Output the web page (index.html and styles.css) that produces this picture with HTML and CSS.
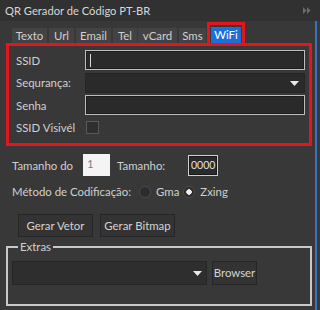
FILE: index.html
```html
<!DOCTYPE html>
<html>
<head>
<meta charset="utf-8">
<link rel="stylesheet" href="styles.css">
</head>
<body>
<div class="window">
  <div class="titlebar">
    <span class="title">QR Gerador de Código PT-BR</span>
    <svg class="pin" width="8" height="7" viewBox="0 0 8 7"><path d="M0 0 L3.5 3.5 L0 7 Z M4 0 L7.5 3.5 L4 7 Z" fill="#6a6a6a"/></svg>
  </div>
  <div class="main">
    <div class="tabs">
      <span class="tab t-texto">Texto</span>
      <span class="tab t-url">Url</span>
      <span class="tab t-email">Email</span>
      <span class="tab t-tel">Tel</span>
      <span class="tab t-vcard">vCard</span>
      <span class="tab t-sms">Sms</span>
      <span class="tab-active-wrap"><span class="tab active">WiFi</span></span>
    </div>
    <div class="wifi-box">
      <div class="form-grid">
        <span class="label">SSID</span>
        <div class="input light"><span class="caret"></span></div>
        <span class="label">Sequrança:</span>
        <div class="input select"><svg class="arrow" width="9" height="5" viewBox="0 0 9 5"><path d="M0 0 H9 L4.5 5 Z" fill="#e8e8e8"/></svg></div>
        <span class="label">Senha</span>
        <div class="input light"></div>
        <span class="label">SSID Visivél</span>
        <div class="check-cell"><span class="checkbox"></span></div>
      </div>
    </div>
    <div class="size-row">
      <span class="label">Tamanho do</span>
      <span class="num-box">1</span>
      <span class="label size-label">Tamanho:</span>
      <span class="dim-box">0000</span>
    </div>
    <div class="method-row">
      <span class="label">Método de Codificação:</span>
      <span class="radio first"></span>
      <span class="label">Gma</span>
      <span class="radio on"></span>
      <span class="label">Zxing</span>
    </div>
    <div class="btn-row">
      <span class="btn">Gerar Vetor</span>
      <span class="btn">Gerar Bitmap</span>
    </div>
    <fieldset class="extras">
      <legend>Extras</legend>
      <div class="extras-row">
        <div class="input select combo"><svg class="arrow" width="9" height="5" viewBox="0 0 9 5"><path d="M0 0 H9 L4.5 5 Z" fill="#e8e8e8"/></svg></div>
        <span class="btn browser">Browser</span>
      </div>
    </fieldset>
  </div>
</div>
</body>
</html>
```

FILE: styles.css
```css
html, body {
  margin: 0;
  padding: 0;
  background: #383838;
}
.window {
  width: 320px;
  height: 310px;
  background: #383838;
  font-family: Lato, "Noto Sans", sans-serif;
  font-size: 11.4px;
  color: #d2d2d2;
  overflow: hidden;
}
.titlebar {
  height: 21px;
  background: #313131;
  display: flex;
  align-items: center;
  justify-content: space-between;
  padding: 0 9px 0 5px;
  box-sizing: border-box;
}
.title {
  font-size: 11.2px;
  color: #d8d8d8;
  line-height: 1;
  white-space: nowrap;
}
.pin { display: block; }
.main {
  margin-right: 3px;
  border-right: 2px solid #3a72bb;
  height: 289px;
  box-sizing: border-box;
}
.tabs {
  display: flex;
  align-items: flex-end;
  padding-left: 12px;
  height: 22px;
}
.tab {
  display: block;
  height: 15px;
  line-height: 15px;
  background: #434343;
  color: #d0d0d0;
  text-align: center;
  white-space: nowrap;
}
.t-texto { width: 35px; }
.t-url { width: 25px; margin-left: 2px; }
.t-email { width: 35px; margin-left: 2px; }
.t-tel { width: 24px; margin-left: 2px; }
.t-vcard { width: 39px; margin-left: 1px; }
.t-sms { width: 27px; margin-left: 2px; }
.tab-active-wrap {
  display: block;
  border: 3px solid #e3161d;
  border-bottom: 0;
  margin-left: 1px;
  padding: 2px 1px 0;
}
.tab.active {
  background: #1c6fd6;
  color: #ffffff;
  width: 30px;
  height: 16px;
  line-height: 16px;
}
.wifi-box {
  margin: 0 3px 0 6px;
  border: 3px solid #e3161d;
  padding: 4px 4px 5px 7px;
}
.form-grid {
  display: grid;
  grid-template-columns: 69px 1fr;
  grid-auto-rows: 20px;
  row-gap: 2.5px;
  align-items: center;
}
.label {
  white-space: nowrap;
  color: #d0d0d0;
}
.input {
  height: 20px;
  box-sizing: border-box;
  background: #2a2a2a;
  position: relative;
}
.input.light {
  border: 1px solid #bdbdbd;
  box-shadow: inset 0 0 0 1px #1e1e1e;
}
.caret {
  position: absolute;
  left: 4px;
  top: 3px;
  width: 1px;
  height: 13px;
  background: #d8d8d8;
}
.input.select {
  border: 1px solid #262626;
}
.arrow {
  position: absolute;
  right: 5px;
  top: 7px;
}
.check-cell {
  display: flex;
  align-items: center;
  height: 20px;
  padding-left: 1px;
}
.checkbox {
  width: 11px;
  height: 11px;
  border: 1px solid #5a5a5a;
  background: #2f2f2f;
}
.size-row {
  display: flex;
  align-items: center;
  padding-left: 12px;
  margin-top: 8px;
  height: 23px;
}
.num-box {
  width: 27px;
  height: 22px;
  box-sizing: border-box;
  background: #f4f4f4;
  color: #808080;
  padding: 2px 0 0 4px;
  margin-left: 10px;
  line-height: 16px;
}
.size-label { margin-left: 7px; }
.dim-box {
  margin-left: 23px;
  width: 30px;
  height: 21px;
  box-sizing: border-box;
  border: 1px solid #cfcfcf;
  box-shadow: inset 0 0 0 1px #1a1a1a;
  background: #2b2b2b;
  color: #e0e0e0;
  font-size: 10.5px;
  display: flex;
  align-items: center;
  justify-content: center;
}
.method-row {
  display: flex;
  align-items: center;
  padding-left: 12px;
  margin-top: 4px;
  height: 22px;
}
.radio {
  width: 10px;
  height: 10px;
  border-radius: 50%;
  border: 1px solid #4a4a4a;
  background: #2c2c2c;
  margin: 0 5px 0 4px;
  box-sizing: content-box;
}
.radio.first { margin-left: 8px; }
.radio.on {
  background: radial-gradient(circle, #eeeeee 0 2.5px, #2c2c2c 3px);
}
.btn-row {
  display: flex;
  gap: 7px;
  padding-left: 18px;
  margin-top: 11px;
}
.btn {
  display: flex;
  align-items: center;
  justify-content: center;
  height: 23px;
  box-sizing: border-box;
  border: 1px solid #262626;
  background: #333333;
  color: #d4d4d4;
  white-space: nowrap;
}
.btn-row .btn { width: 75px; }
.extras {
  margin: 5px 3px 0 6px;
  border: 2px solid #c8c8c8;
  padding: 9px 4px 0 4px;
  height: 64px;
  box-sizing: border-box;
  min-width: 0;
}
.extras legend {
  padding: 0 2px;
  margin-left: 6px;
  line-height: 10px;
  color: #d0d0d0;
}
.extras-row {
  display: flex;
  gap: 5px;
}
.combo {
  width: 195px;
  height: 24px;
  border-color: #222;
  background: #2e2e2e;
}
.combo .arrow { top: 9px; right: 4px; }
.browser {
  width: 45px;
  height: 24px;
}
```
